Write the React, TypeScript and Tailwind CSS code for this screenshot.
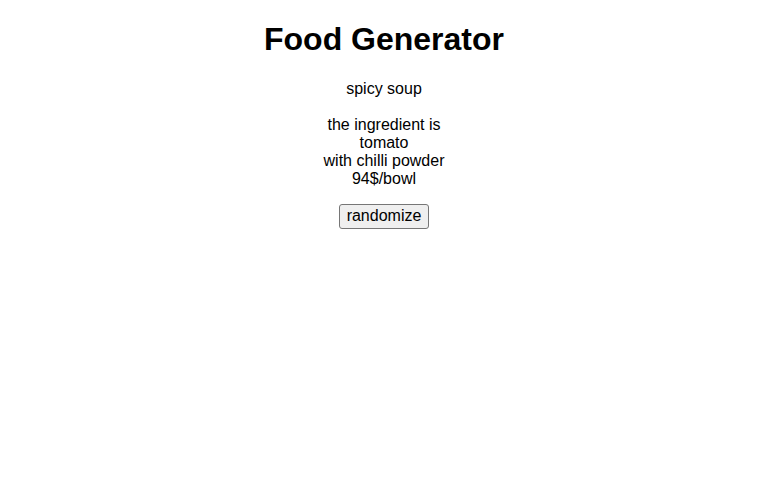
import React, { useState } from 'react';

interface Food {
  name: string;
  ingredient: string;
  spice: string;
  price: number;
}

const foods: Food[] = [
  { name: 'spicy soup', ingredient: 'tomato', spice: 'chilli powder', price: 94 },
  { name: 'mild curry', ingredient: 'potato', spice: 'turmeric', price: 42 },
  { name: 'hot noodles', ingredient: 'mushroom', spice: 'black pepper', price: 67 },
];

const App: React.FC = () => {
  const [food, setFood] = useState<Food>(foods[0]);

  const randomize = () => {
    setFood(foods[Math.floor(Math.random() * foods.length)]);
  };

  return (
    <div className="min-h-screen bg-white text-black text-center font-['Liberation_Sans',Arial,sans-serif] leading-[normal] text-base pt-[21.44px]">
      <h1 className="text-[32px] font-bold mb-[21.44px] leading-[normal]">Food Generator</h1>
      <p className="mb-[18px]">{food.name}</p>
      <p className="mb-4">
        the ingredient is
        <br />
        {food.ingredient}
        <br />
        with {food.spice}
        <br />
        {food.price}$/bowl
      </p>
      <button
        onClick={randomize}
        className="text-[16px] leading-[normal] px-[7px] py-[2.5px] bg-[#efefef] border border-[#767676] rounded-[3px] text-black"
      >
        randomize
      </button>
    </div>
  );
};

export default App;
